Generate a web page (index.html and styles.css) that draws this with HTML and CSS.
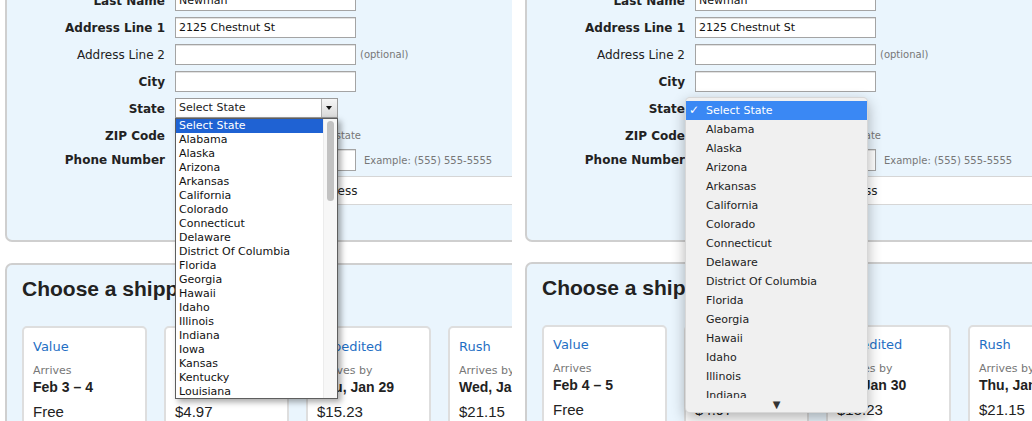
FILE: index.html
```html
<!doctype html>
<html lang="en">
  <head>
    <meta charset="UTF-8" />
    <title>Checkout - State picker</title>
    <link rel="stylesheet" href="styles.css">
  </head>
  <body>
    <div class="shots">

      <!-- listbox style dropdown -->
      <div class="shot shot-win">
        <div class="page">
          <div class="panel address">
            <div class="row"><label class="lbl req">Last Name</label><div class="field">Newman</div></div>
            <div class="row"><label class="lbl req">Address Line 1</label><div class="field">2125 Chestnut St</div></div>
            <div class="row"><label class="lbl">Address Line 2</label><div class="field"></div><span class="hint">(optional)</span></div>
            <div class="row"><label class="lbl req">City</label><div class="field"></div></div>
            <div class="row">
              <label class="lbl req">State</label>
              <div class="select-wrap">
                <div class="select">Select State<span class="select-btn"></span></div>
                <div class="listbox">
                  <ul class="options">
                    <li class="picked">Select State</li>
                    <li>Alabama</li>
                    <li>Alaska</li>
                    <li>Arizona</li>
                    <li>Arkansas</li>
                    <li>California</li>
                    <li>Colorado</li>
                    <li>Connecticut</li>
                    <li>Delaware</li>
                    <li>District Of Columbia</li>
                    <li>Florida</li>
                    <li>Georgia</li>
                    <li>Hawaii</li>
                    <li>Idaho</li>
                    <li>Illinois</li>
                    <li>Indiana</li>
                    <li>Iowa</li>
                    <li>Kansas</li>
                    <li>Kentucky</li>
                    <li>Louisiana</li>
                  </ul>
                  <div class="scrollbar"><div class="thumb"></div></div>
                </div>
              </div>
            </div>
            <div class="row row-zip"><label class="lbl req">ZIP Code</label><div class="field zip"></div><span class="hint">Must match the state</span></div>
            <div class="row row-phone"><label class="lbl req">Phone Number</label><div class="field"></div><span class="hint wide">Example: (555) 555-5555</span></div>
            <div class="extra"><span class="checkbox"></span>Use as my billing address</div>
          </div>

          <div class="panel shipping">
            <h2>Choose a shipping speed</h2>
            <div class="cards">
              <div class="card">
                <div class="speed">Value</div>
                <div class="arrives">Arrives</div>
                <div class="date">Feb 3 &ndash; 4</div>
                <div class="price">Free</div>
              </div>
              <div class="card">
                <div class="speed">Standard</div>
                <div class="arrives">Arrives by</div>
                <div class="date">Mon, Feb 2</div>
                <div class="price">$4.97</div>
              </div>
              <div class="card">
                <div class="speed">Expedited</div>
                <div class="arrives">Arrives by</div>
                <div class="date">Thu, Jan 29</div>
                <div class="price">$15.23</div>
              </div>
              <div class="card">
                <div class="speed">Rush</div>
                <div class="arrives">Arrives by</div>
                <div class="date">Wed, Jan 28</div>
                <div class="price">$21.15</div>
              </div>
            </div>
          </div>
        </div>
      </div>

      <!-- native popup menu -->
      <div class="shot shot-mac">
        <div class="page">
          <div class="panel address">
            <div class="row"><label class="lbl req">Last Name</label><div class="field">Newman</div></div>
            <div class="row"><label class="lbl req">Address Line 1</label><div class="field">2125 Chestnut St</div></div>
            <div class="row"><label class="lbl">Address Line 2</label><div class="field"></div><span class="hint">(optional)</span></div>
            <div class="row"><label class="lbl req">City</label><div class="field"></div></div>
            <div class="row">
              <label class="lbl req">State</label>
              <div class="select-wrap">
                <div class="select">Select State<span class="select-btn"></span></div>
                <div class="popup">
                  <ul class="menu">
                    <li class="picked">Select State</li>
                    <li>Alabama</li>
                    <li>Alaska</li>
                    <li>Arizona</li>
                    <li>Arkansas</li>
                    <li>California</li>
                    <li>Colorado</li>
                    <li>Connecticut</li>
                    <li>Delaware</li>
                    <li>District Of Columbia</li>
                    <li>Florida</li>
                    <li>Georgia</li>
                    <li>Hawaii</li>
                    <li>Idaho</li>
                    <li>Illinois</li>
                    <li>Indiana</li>
                    <li>Iowa</li>
                  </ul>
                  <div class="more">&#9660;</div>
                </div>
              </div>
            </div>
            <div class="row row-zip"><label class="lbl req">ZIP Code</label><div class="field zip"></div><span class="hint">Must match the state</span></div>
            <div class="row row-phone"><label class="lbl req">Phone Number</label><div class="field"></div><span class="hint wide">Example: (555) 555-5555</span></div>
            <div class="extra"><span class="checkbox"></span>Use as my billing address</div>
          </div>

          <div class="panel shipping">
            <h2>Choose a shipping speed</h2>
            <div class="cards">
              <div class="card">
                <div class="speed">Value</div>
                <div class="arrives">Arrives</div>
                <div class="date">Feb 4 &ndash; 5</div>
                <div class="price">Free</div>
              </div>
              <div class="card">
                <div class="speed">Standard</div>
                <div class="arrives">Arrives by</div>
                <div class="date">Tue, Feb 3</div>
                <div class="price">$4.97</div>
              </div>
              <div class="card">
                <div class="speed">Expedited</div>
                <div class="arrives">Arrives by</div>
                <div class="date">Fri, Jan 30</div>
                <div class="price">$15.23</div>
              </div>
              <div class="card">
                <div class="speed">Rush</div>
                <div class="arrives">Arrives by</div>
                <div class="date">Thu, Jan 29</div>
                <div class="price">$21.15</div>
              </div>
            </div>
          </div>
        </div>
      </div>

    </div>
  </body>
</html>
```

FILE: styles.css
```css
body {
  margin: 0;
  background: white;
  font-family: "DejaVu Sans", Verdana, sans-serif;
  color: #222;
}
.shots {
  display: flex;
  gap: 8px;
}
.shot {
  width: 512px;
  height: 421px;
  overflow: hidden;
  position: relative;
}
.page {
  width: 600px;
  margin-top: -40px;
  padding-left: 5px;
}
.panel {
  background: #eaf5fd;
  border: 2px solid #cfcfcf;
  border-radius: 7px;
}
.address {
  padding: 28px 0 35px 0;
}
.row {
  display: flex;
  align-items: center;
  height: 21px;
  margin-bottom: 6px;
}
.row-zip {
  margin-bottom: 3px;
}
.row-phone {
  height: 22px;
  margin-bottom: 0;
}
.lbl {
  width: 158px;
  margin-right: 10px;
  text-align: right;
  font-size: 12px;
}
.req {
  font-weight: bold;
}
.field {
  box-sizing: border-box;
  width: 181px;
  height: 100%;
  background: white;
  border: 1px solid #a4a4a4;
  box-shadow: inset 0 1px 0 #e2e2e2;
  padding-left: 3px;
  font-size: 11px;
  line-height: 19px;
  color: #111;
}
.field.zip {
  width: 73px;
}
.hint {
  margin-left: 6px;
  font-size: 10px;
  color: #777;
}
.row:nth-child(3) .hint {
  margin-left: 4px;
}
.hint.wide {
  margin-left: 8px;
}
.extra {
  display: flex;
  align-items: center;
  margin: 5px 0 0 168px;
  height: 27px;
  padding-left: 10px;
  background: white;
  border-top: 1px solid #d6d6d6;
  border-bottom: 1px solid #d6d6d6;
  font-size: 12px;
}
.checkbox {
  width: 11px;
  height: 11px;
  border: 1px solid #888;
  border-radius: 2px;
  margin-right: 6px;
}

/* fake select box */
.select-wrap {
  position: relative;
  height: 100%;
}
.select {
  box-sizing: border-box;
  position: relative;
  width: 163px;
  height: 20px;
  background: white;
  border: 1px solid #9a9a9a;
  padding-left: 3px;
  font-size: 11px;
  line-height: 18px;
}
.select-btn {
  position: absolute;
  top: 0;
  right: 0;
  bottom: 0;
  width: 15px;
  background: linear-gradient(#f6f6f6, #dadada);
  border-left: 1px solid #b0b0b0;
}
.select-btn::after {
  content: "";
  position: absolute;
  left: 4px;
  top: 7px;
  border-left: 3.5px solid transparent;
  border-right: 3.5px solid transparent;
  border-top: 4px solid #111;
}

/* listbox dropdown (left shot) */
.listbox {
  position: absolute;
  z-index: 10;
  top: 20px;
  left: 0;
  width: 163px;
  height: 281px;
  box-sizing: border-box;
  background: white;
  border: 1px solid #5e5e5e;
  box-shadow: 3px 3px 6px rgba(0, 0, 0, 0.35);
}
.options {
  list-style: none;
  margin: 0;
  padding: 0;
  width: 148px;
}
.options li {
  font-size: 11px;
  line-height: 14px;
  height: 14px;
  padding-left: 3px;
  color: #111;
  white-space: nowrap;
}
.options li.picked {
  background: #1f62d3;
  color: white;
}
.scrollbar {
  position: absolute;
  top: 0;
  right: 0;
  bottom: 0;
  width: 13px;
  background: #f7f7f7;
  border-left: 1px solid #ececec;
}
.thumb {
  position: absolute;
  left: 3px;
  top: 2px;
  width: 7px;
  height: 80px;
  border-radius: 4px;
  background: #c2c2c2;
}

/* popup menu (right shot) */
.popup {
  position: absolute;
  z-index: 10;
  top: -1px;
  left: -10px;
  width: 183px;
  height: 316px;
  box-sizing: border-box;
  background: #f0f0f0;
  border: 1px solid rgba(0, 0, 0, 0.1);
  border-radius: 5px;
  box-shadow: 0 5px 14px rgba(0, 0, 0, 0.3);
}
.menu {
  list-style: none;
  margin: 0;
  padding: 3px 0 0 0;
  height: 297px;
  overflow: hidden;
}
.menu li {
  position: relative;
  height: 19px;
  line-height: 19px;
  padding-left: 20px;
  font-size: 11px;
  color: #222;
}
.menu li.picked {
  background: #3a88f4;
  color: white;
}
.menu li.picked::before {
  content: "\2713";
  position: absolute;
  left: 3px;
  font-size: 12px;
  font-weight: bold;
}
.more {
  text-align: center;
  font-size: 10px;
  line-height: 13px;
  color: #333;
}

/* shipping speeds */
.shipping {
  margin-top: 20px;
  padding: 12px 15px;
  height: 200px;
}
.shot-win .shipping {
  margin-top: 21px;
}
.shipping h2 {
  margin: 0;
  font-family: "Liberation Sans", Arial, sans-serif;
  font-size: 21px;
  line-height: 24px;
  color: #222;
}
.cards {
  display: flex;
  gap: 17px;
  margin-top: 25px;
}
.card {
  box-sizing: border-box;
  width: 125px;
  height: 140px;
  padding: 10px 9px;
  background: white;
  border: 2px solid #dedede;
  border-radius: 5px;
}
.shot-win .card {
  padding-top: 11px;
}
.speed {
  font-size: 13px;
  line-height: 16px;
  color: #1f6fc4;
}
.arrives {
  margin-top: 9px;
  font-size: 11px;
  line-height: 14px;
  color: #777;
}
.date {
  margin-top: 1px;
  font-family: "Liberation Sans", Arial, sans-serif;
  font-weight: bold;
  font-size: 14px;
  line-height: 16px;
}
.price {
  margin-top: 8px;
  font-family: "Liberation Sans", Arial, sans-serif;
  font-size: 15px;
  line-height: 18px;
}
```
